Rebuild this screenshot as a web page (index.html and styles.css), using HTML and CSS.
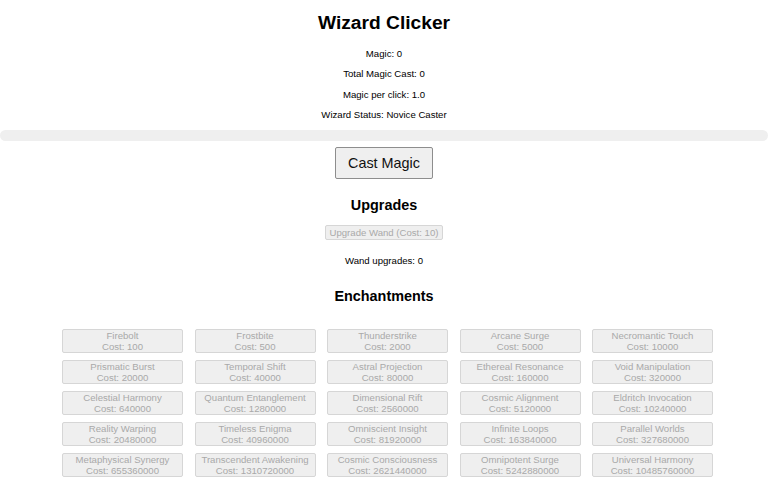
FILE: index.html
```html
<!DOCTYPE html>
<html lang="en">
<head>
<meta charset="utf-8">
<title>Wizard Clicker</title>
<link rel="stylesheet" href="styles.css">
</head>
<body>
  <h1 class="title">Wizard Clicker</h1>
  <div class="stats">
    <p>Magic: 0</p>
    <p>Total Magic Cast: 0</p>
    <p>Magic per click: 1.0</p>
    <p>Wizard Status: Novice Caster</p>
  </div>
  <div class="progress"><div class="progress-fill" style="width: 0%"></div></div>
  <button class="cast-btn">Cast Magic</button>
  <h2 class="section upgrades-title">Upgrades</h2>
  <button class="upgrade-btn" disabled>Upgrade Wand (Cost: 10)</button>
  <p class="wand-count">Wand upgrades: 0</p>
  <h2 class="section ench-title">Enchantments</h2>
  <div class="grid">
    <button class="ench" disabled><span>Firebolt</span><span>Cost: 100</span></button>
    <button class="ench" disabled><span>Frostbite</span><span>Cost: 500</span></button>
    <button class="ench" disabled><span>Thunderstrike</span><span>Cost: 2000</span></button>
    <button class="ench" disabled><span>Arcane Surge</span><span>Cost: 5000</span></button>
    <button class="ench" disabled><span>Necromantic Touch</span><span>Cost: 10000</span></button>
    <button class="ench" disabled><span>Prismatic Burst</span><span>Cost: 20000</span></button>
    <button class="ench" disabled><span>Temporal Shift</span><span>Cost: 40000</span></button>
    <button class="ench" disabled><span>Astral Projection</span><span>Cost: 80000</span></button>
    <button class="ench" disabled><span>Ethereal Resonance</span><span>Cost: 160000</span></button>
    <button class="ench" disabled><span>Void Manipulation</span><span>Cost: 320000</span></button>
    <button class="ench" disabled><span>Celestial Harmony</span><span>Cost: 640000</span></button>
    <button class="ench" disabled><span>Quantum Entanglement</span><span>Cost: 1280000</span></button>
    <button class="ench" disabled><span>Dimensional Rift</span><span>Cost: 2560000</span></button>
    <button class="ench" disabled><span>Cosmic Alignment</span><span>Cost: 5120000</span></button>
    <button class="ench" disabled><span>Eldritch Invocation</span><span>Cost: 10240000</span></button>
    <button class="ench" disabled><span>Reality Warping</span><span>Cost: 20480000</span></button>
    <button class="ench" disabled><span>Timeless Enigma</span><span>Cost: 40960000</span></button>
    <button class="ench" disabled><span>Omniscient Insight</span><span>Cost: 81920000</span></button>
    <button class="ench" disabled><span>Infinite Loops</span><span>Cost: 163840000</span></button>
    <button class="ench" disabled><span>Parallel Worlds</span><span>Cost: 327680000</span></button>
    <button class="ench" disabled><span>Metaphysical Synergy</span><span>Cost: 655360000</span></button>
    <button class="ench" disabled><span>Transcendent Awakening</span><span>Cost: 1310720000</span></button>
    <button class="ench" disabled><span>Cosmic Consciousness</span><span>Cost: 2621440000</span></button>
    <button class="ench" disabled><span>Omnipotent Surge</span><span>Cost: 5242880000</span></button>
    <button class="ench" disabled><span>Universal Harmony</span><span>Cost: 10485760000</span></button>
  </div>
</body>
</html>
```
FILE: styles.css
```css
html, body {
  margin: 0;
  padding: 0;
  background: #ffffff;
}

body {
  font-family: "Liberation Sans", Arial, sans-serif;
  color: #000;
  text-align: center;
  display: flex;
  flex-direction: column;
  align-items: center;
}

.title {
  font-size: 19.2px;
  line-height: 22px;
  font-weight: bold;
  margin: 12px 0 14px;
}

.stats {
  display: flex;
  flex-direction: column;
  gap: 9.4px;
}

.stats p,
.wand-count {
  font-size: 9.6px;
  line-height: 11px;
  margin: 0;
}

.progress {
  align-self: stretch;
  height: 11px;
  margin-top: 9.8px;
  background: #efefef;
  border-radius: 6px;
  overflow: hidden;
}

.progress-fill {
  height: 100%;
  background: #8a5cd6;
}

.cast-btn {
  margin-top: 6px;
  font-family: "Liberation Sans", Arial, sans-serif;
  font-size: 14.4px;
  line-height: 16px;
  padding: 7px 12px;
  color: #111;
  background: #efefef;
  border: 1px solid #8d8d8d;
  border-radius: 2px;
}

.section {
  font-size: 14.4px;
  line-height: 16.5px;
  font-weight: bold;
  margin: 0;
}

.upgrades-title {
  margin-top: 18px;
}

.upgrade-btn {
  margin-top: 11.5px;
  font-family: "Liberation Sans", Arial, sans-serif;
  font-size: 9.6px;
  line-height: 11px;
  padding: 1px 3.3px;
  color: #a9a9a9;
  background: #efefef;
  border: 1px solid #d6d6d6;
  border-radius: 2px;
}

.wand-count {
  margin-top: 15px;
}

.ench-title {
  margin-top: 22px;
}

.grid {
  align-self: flex-start;
  margin: 25px 0 0 62px;
  width: 651px;
  display: grid;
  grid-template-columns: repeat(5, 121px);
  column-gap: 11.5px;
  row-gap: 7px;
}

.ench {
  display: flex;
  flex-direction: column;
  align-items: center;
  height: 24px;
  padding: 0;
  font-family: "Liberation Sans", Arial, sans-serif;
  font-size: 9.6px;
  line-height: 11px;
  color: #a9a9a9;
  background: #efefef;
  border: 1px solid #d6d6d6;
  border-radius: 2px;
  white-space: nowrap;
}

.ench span {
  display: block;
}
```
